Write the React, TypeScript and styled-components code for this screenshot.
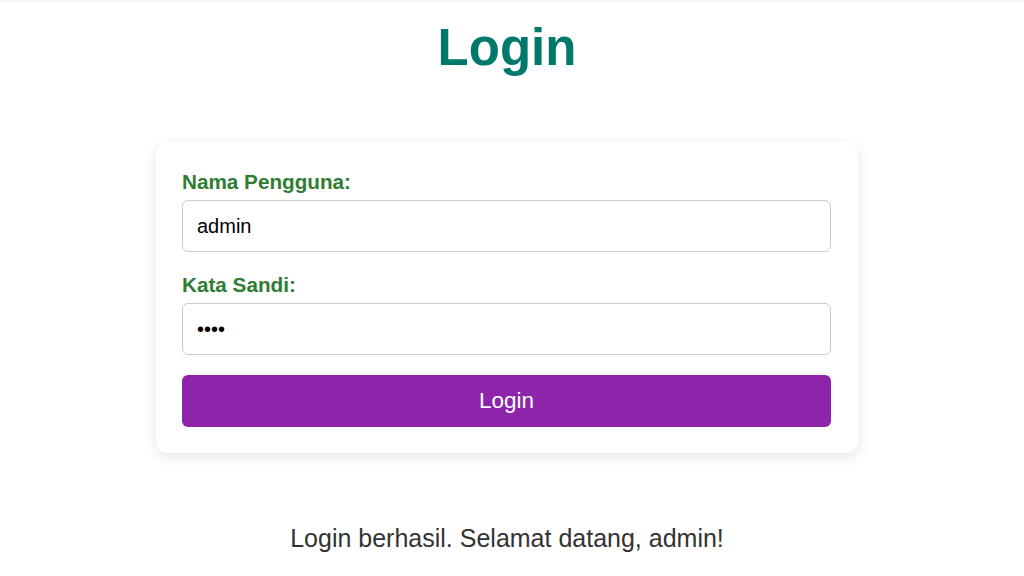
import React from "react";
import styled, { createGlobalStyle } from "styled-components";

const Global = createGlobalStyle`
  html, body { margin: 0; padding: 0; background: #ffffff; }
  body { font-family: "Liberation Sans", Arial, Helvetica, sans-serif; }
  * { box-sizing: border-box; }
`;

const Page = styled.div`
  width: 1024px;
  height: 576px;
  padding-right: 10px;
  border-top: 2px solid #f5f5f5;
  display: flex;
  flex-direction: column;
  align-items: center;
  overflow: hidden;
`;

const Title = styled.h1`
  margin: 16px 0 0;
  font-size: 51px;
  line-height: 59px;
  font-weight: 700;
  color: #00796b;
  text-align: center;
`;

const Card = styled.form`
  margin-top: 65px;
  width: 702px;
  padding: 28px 27px 26px 26px;
  background: #ffffff;
  border-radius: 12px;
  box-shadow: 0 4px 14px rgba(0, 0, 0, 0.1);
  display: flex;
  flex-direction: column;
`;

const Label = styled.label<{ $top?: number }>`
  display: block;
  margin-top: ${(p) => p.$top ?? 0}px;
  font-size: 20.7px;
  line-height: 23px;
  font-weight: 700;
  color: #2e7d32;
`;

const Input = styled.input`
  display: block;
  width: 100%;
  height: 52px;
  margin-top: 7px;
  padding: 0 14px;
  border: 1px solid #cccccc;
  border-radius: 6px;
  font-family: "Liberation Sans", Arial, sans-serif;
  font-size: 20px;
  color: #000000;
  background: #ffffff;
  outline: none;
`;

const Button = styled.button`
  margin-top: 20px;
  height: 52px;
  width: 100%;
  border: none;
  border-radius: 6px;
  background: #8e24aa;
  color: #ffffff;
  font-family: "Liberation Sans", Arial, sans-serif;
  font-size: 22.5px;
  cursor: pointer;
`;

const Message = styled.p`
  margin: 71px 0 0;
  font-size: 25px;
  line-height: 29px;
  color: #333333;
  text-align: center;
`;

export default function App() {
  return (
    <>
      <Global />
      <Page>
        <Title>Login</Title>
        <Card onSubmit={(e) => e.preventDefault()}>
          <Label htmlFor="user">Nama Pengguna:</Label>
          <Input id="user" type="text" defaultValue="admin" />
          <Label htmlFor="pass" $top={21}>
            Kata Sandi:
          </Label>
          <Input id="pass" type="password" defaultValue="1234" />
          <Button type="submit">Login</Button>
        </Card>
        <Message>Login berhasil. Selamat datang, admin!</Message>
      </Page>
    </>
  );
}
